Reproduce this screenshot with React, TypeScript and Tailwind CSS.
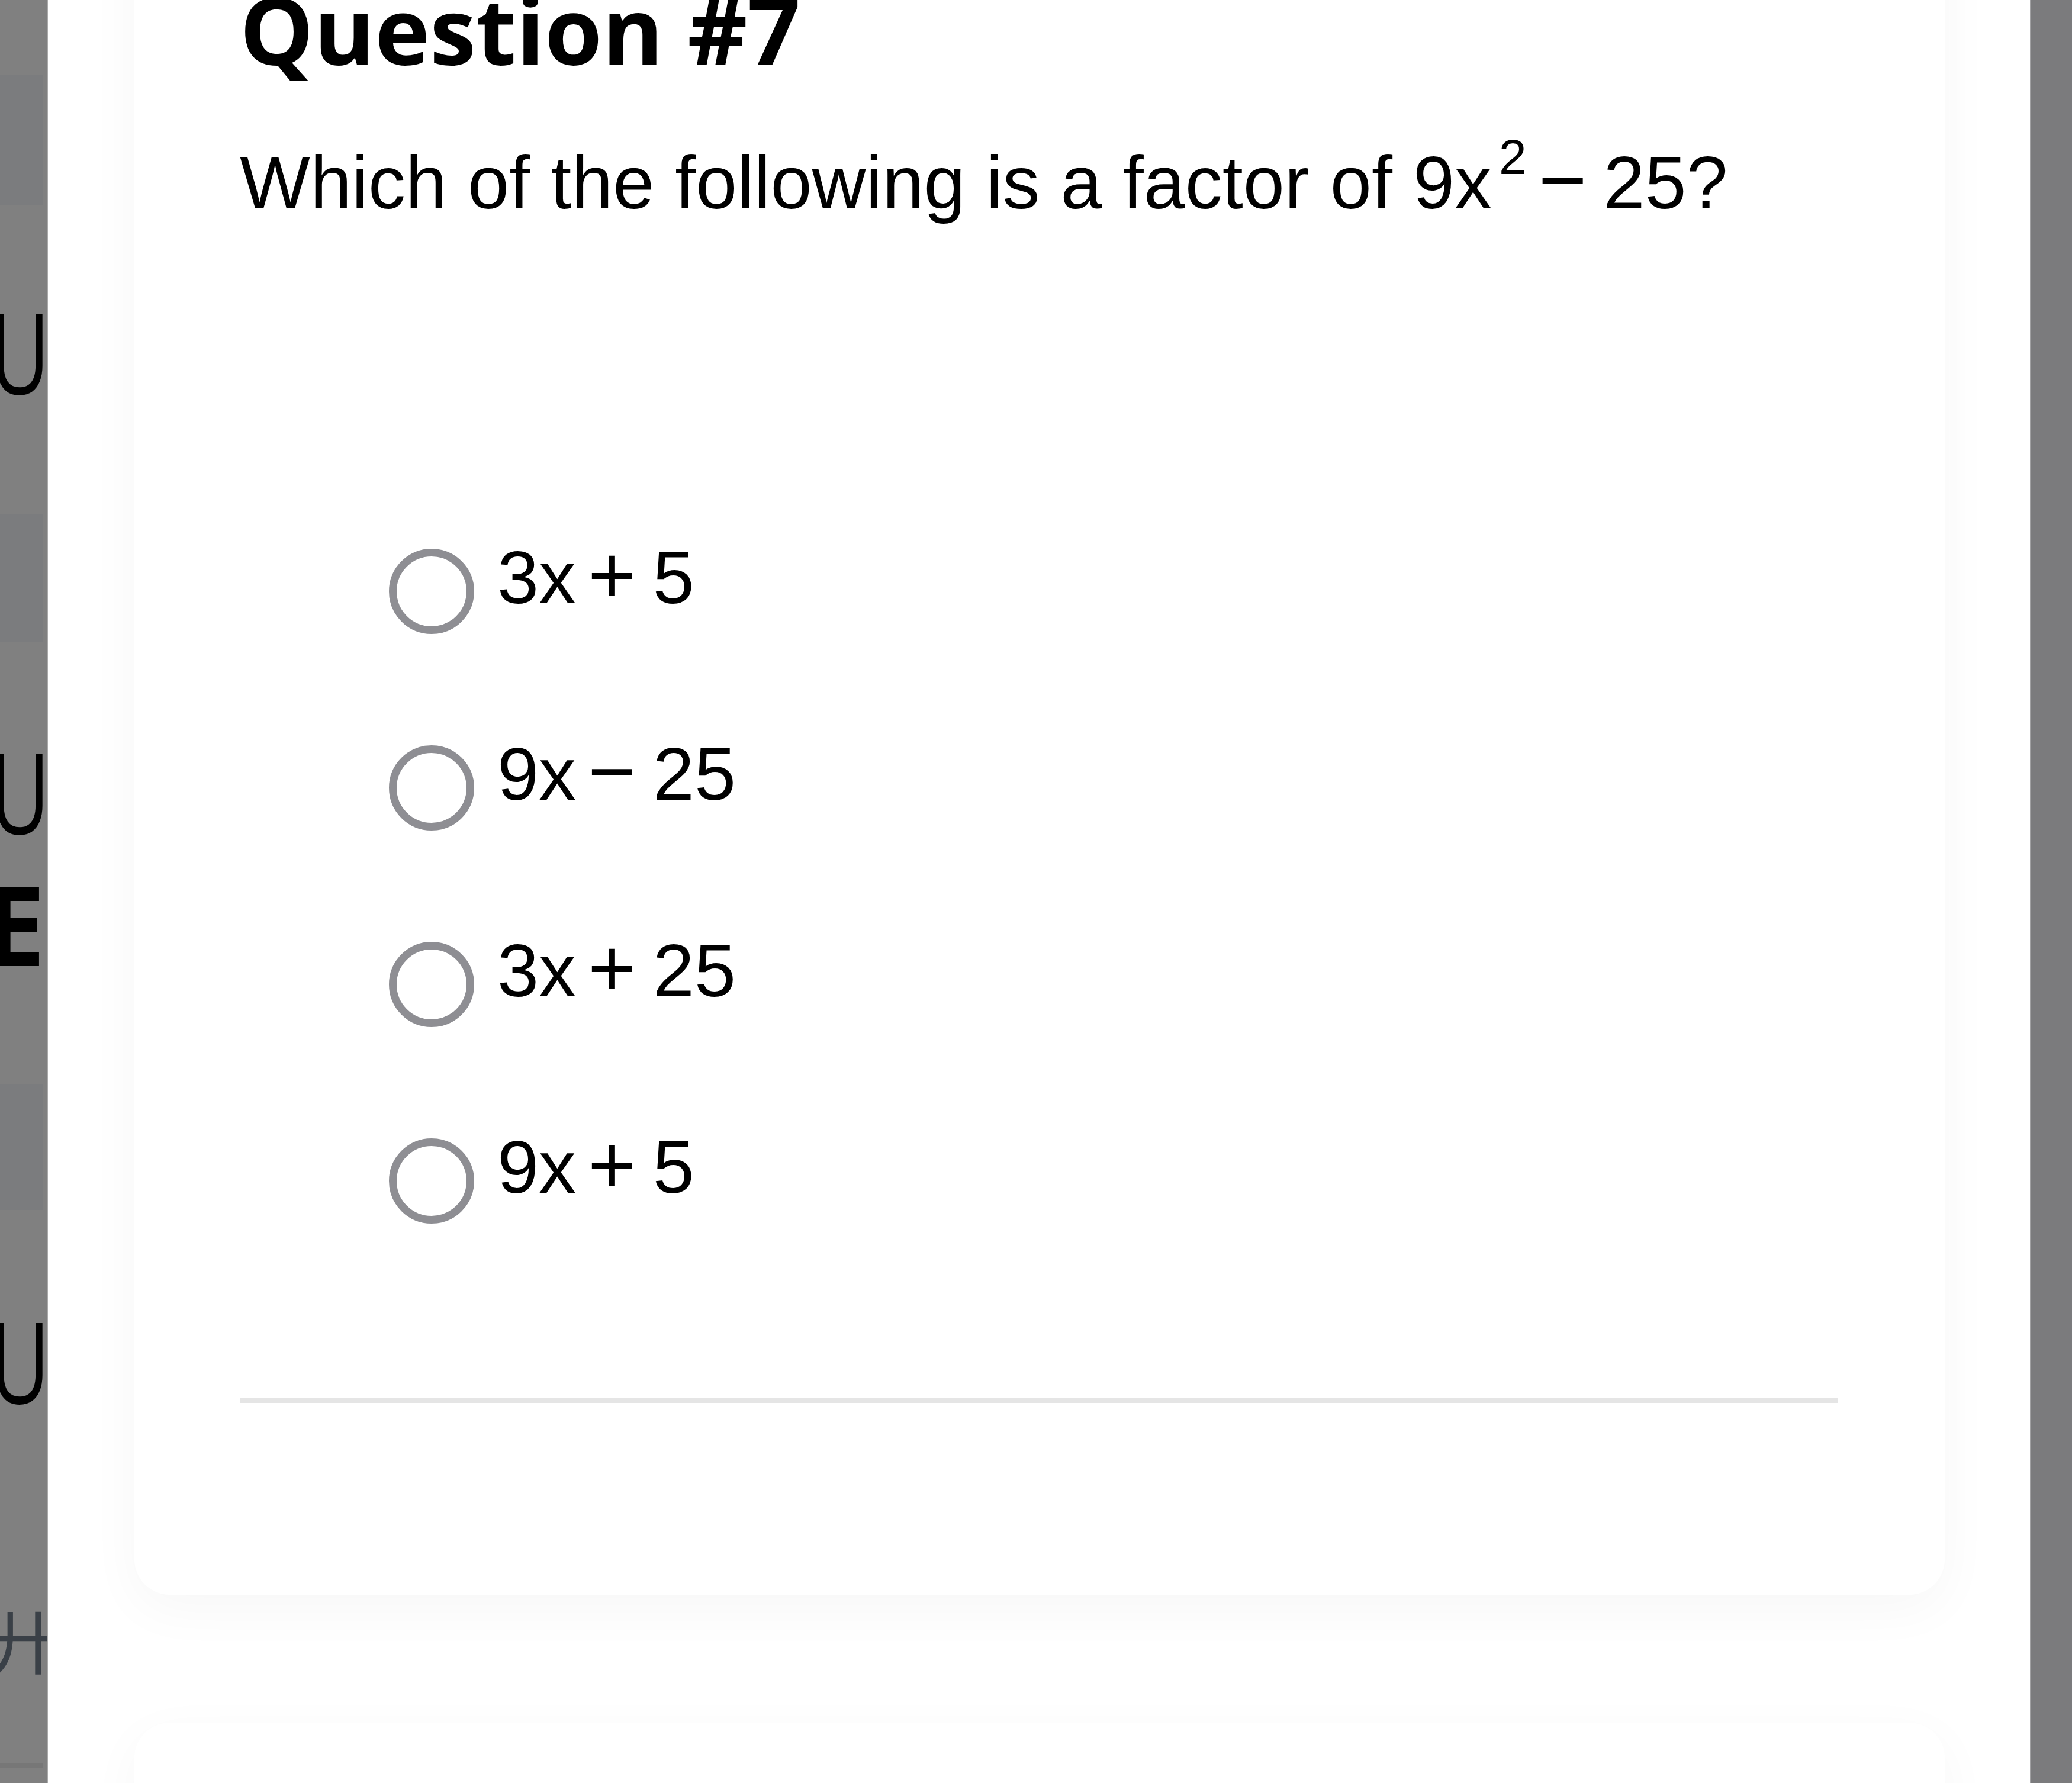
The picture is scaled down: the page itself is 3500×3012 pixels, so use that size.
import React from "react";

const sans = { fontFamily: '"Liberation Sans", Arial, Helvetica, sans-serif' };

function Op({ c }: { c: string }) {
  return (
    <span className="ml-[20px] mr-[28px] text-[140px] leading-[0]">{c}</span>
  );
}

function Option({ parts }: { parts: [string, string, string] }) {
  return (
    <div className="flex items-start pl-[252px]">
      <div className="mt-[14px] h-[144px] w-[144px] shrink-0 rounded-full border-[13px] border-[#8e8e93]" />
      <div className="ml-[39px] whitespace-nowrap text-[126px] leading-none text-black" style={sans}>
        {parts[0]}
        <Op c={parts[1]} />
        {parts[2]}
      </div>
    </div>
  );
}

function StripLetter({
  ch,
  size,
  weight,
  mr,
  color,
  h,
  mt,
  cjk,
  narrow,
}: {
  ch: string;
  size: string;
  weight: string;
  mr: string;
  color: string;
  h: string;
  mt: string;
  cjk?: boolean;
  narrow?: boolean;
}) {
  return (
    <div className={`flex w-[81px] shrink-0 justify-end overflow-hidden ${h} ${mt}`}>
      <span
        className={`inline-block whitespace-nowrap leading-none ${size} ${weight} ${mr} ${color} ${
          narrow ? "origin-right scale-x-[0.74]" : ""
        }`}
        style={{
          fontFamily: cjk
            ? '"Noto Sans CJK JP", "Noto Sans CJK SC", sans-serif'
            : '"Open Sans", "Noto Sans", sans-serif',
        }}
      >
        {ch}
      </span>
    </div>
  );
}

export default function App() {
  return (
    <div className="flex h-[3012px] w-[3500px] overflow-hidden bg-white">
      {/* left dimmed strip */}
      <div className="flex h-full w-[81px] shrink-0 flex-col overflow-hidden border-r-[2px] border-[#a9a9a9] bg-[#808080]">
        <div className="mt-[127px] h-[219px] w-[72px] shrink-0 bg-[#7b7c7e]" />
        <StripLetter ch="U" size="text-[190px]" weight="font-normal" mr="mr-[-4px]" color="text-black" h="h-[200px]" mt="mt-[152px]" narrow />
        <div className="mt-[170px] h-[217px] w-[72px] shrink-0 bg-[#7b7c7e]" />
        <StripLetter ch="U" size="text-[190px]" weight="font-normal" mr="mr-[-4px]" color="text-black" h="h-[200px]" mt="mt-[156px]" narrow />
        <StripLetter ch="E" size="text-[186px]" weight="font-bold" mr="mr-[4px]" color="text-black" h="h-[190px]" mt="mt-[26px]" />
        <div className="mt-[175px] h-[212px] w-[72px] shrink-0 bg-[#7b7c7e]" />
        <StripLetter ch="U" size="text-[190px]" weight="font-normal" mr="mr-[-4px]" color="text-black" h="h-[200px]" mt="mt-[159px]" narrow />
        <StripLetter ch="廾" size="text-[117px]" weight="font-normal" mr="-mr-[18px]" color="text-[#3a4047]" h="h-[160px]" mt="mt-[307px]" cjk />
        <div className="mt-[109px] h-[8px] w-[72px] shrink-0 bg-[#777777]" />
      </div>

      {/* modal sheet */}
      <div className="flex min-w-0 flex-1 flex-col bg-white">
        <div className="-mt-[200px] ml-[146px] mr-[144px] shrink-0 rounded-[60px] bg-white pb-[324px] pl-[178px] pr-[180px] pt-[170px] shadow-[0_24px_90px_rgba(0,0,0,0.035)]">
          <div
            className="whitespace-nowrap text-[157px] font-bold leading-none text-black"
            style={{ fontFamily: '"Open Sans", "Noto Sans", sans-serif' }}
          >
            Question #7
          </div>
          <div className="mt-[119px] whitespace-nowrap text-[126px] leading-none text-black" style={sans}>
            Which of the following is a factor of 9x
            <span className="ml-[12px] align-[58px] text-[84px] leading-[0]">2</span>
            <Op c="−" />
            25?
          </div>
          <div className="mt-[541px] flex flex-col gap-[174px]">
            <Option parts={["3x", "+", "5"]} />
            <Option parts={["9x", "−", "25"]} />
            <Option parts={["3x", "+", "25"]} />
            <Option parts={["9x", "+", "5"]} />
          </div>
          <div className="mt-[294px] h-[9px] w-full bg-[#e5e5e5]" />
        </div>
        <div className="ml-[146px] mr-[144px] mt-[216px] h-[600px] shrink-0 rounded-[60px] bg-white shadow-[0_24px_90px_rgba(0,0,0,0.035)]" />
      </div>

      {/* right dimmed strip */}
      <div className="h-full w-[71px] shrink-0 border-l-[2px] border-[#a0a0a2] bg-[#7b7b7d]" />
    </div>
  );
}
